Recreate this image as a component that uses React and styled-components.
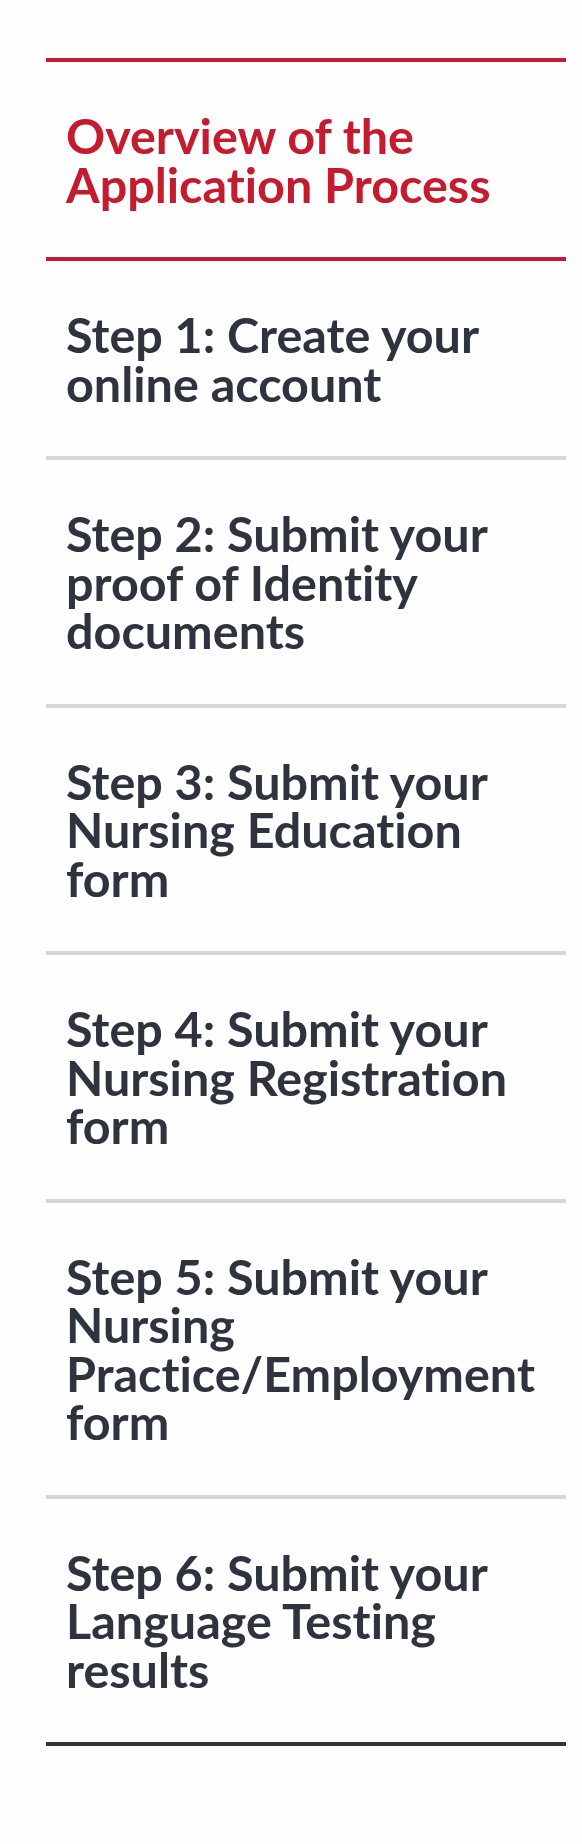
import React from 'react';
import styled, { createGlobalStyle } from 'styled-components';

const GlobalStyle = createGlobalStyle`
  body {
    margin: 0;
    background: #fefefe;
    font-family: Lato, "Open Sans", sans-serif;
  }
`;

const Page = styled.div`
  padding: 58px 16px 98px 46px;
`;

const StepNav = styled.nav`
  width: 520px;
  border-top: 4px solid #c51b2e;

  ul {
    list-style: none;
    margin: 0;
    padding: 0;
  }
`;

const StepItem = styled.li`
  padding: 49px 18px 49px 20px;
  border-bottom: 4px solid ${props => (props.$active ? '#c51b2e' : '#d6d6da')};

  &:last-child {
    border-bottom-color: #2f333e;
  }

  a {
    display: block;
    font-size: 48.5px;
    line-height: 48.5px;
    font-weight: bold;
    font-variant-ligatures: none;
    color: ${props => (props.$active ? '#c51b2e' : '#2f333e')};
    text-decoration: none;
    cursor: pointer;
  }
`;

const steps = [
  'Overview of the Application Process',
  'Step 1: Create your online account',
  'Step 2: Submit your proof of Identity documents',
  'Step 3: Submit your Nursing Education form',
  'Step 4: Submit your Nursing Registration form',
  'Step 5: Submit your Nursing Practice/Employment form',
  'Step 6: Submit your Language Testing results',
];

function App() {
  return (
    <>
      <GlobalStyle />
      <Page>
        <StepNav>
          <ul>
            {steps.map((label, i) => (
              <StepItem key={label} $active={i === 0}>
                <a>{label}</a>
              </StepItem>
            ))}
          </ul>
        </StepNav>
      </Page>
    </>
  );
}

export default App;
